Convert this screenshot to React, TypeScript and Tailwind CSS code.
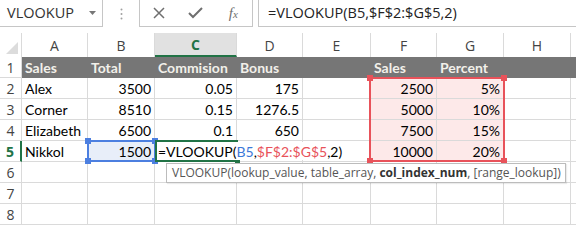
import React from "react";

const cols = [
  { w: 66, label: "A" },
  { w: 67, label: "B" },
  { w: 82, label: "C" },
  { w: 66, label: "D" },
  { w: 68, label: "E" },
  { w: 66, label: "F" },
  { w: 67, label: "G" },
  { w: 67, label: "H" },
];

type Cell = { t?: string; r?: boolean };
const data: Cell[][] = [
  [{ t: "Sales" }, { t: "Total" }, { t: "Commision" }, { t: "Bonus" }, {}, { t: "Sales" }, { t: "Percent" }, {}],
  [{ t: "Alex" }, { t: "3500", r: true }, { t: "0.05", r: true }, { t: "175", r: true }, {}, { t: "2500", r: true }, { t: "5%", r: true }, {}],
  [{ t: "Corner" }, { t: "8510", r: true }, { t: "0.15", r: true }, { t: "1276.5", r: true }, {}, { t: "5000", r: true }, { t: "10%", r: true }, {}],
  [{ t: "Elizabeth" }, { t: "6500", r: true }, { t: "0.1", r: true }, { t: "650", r: true }, {}, { t: "7500", r: true }, { t: "15%", r: true }, {}],
  [{ t: "Nikkol" }, { t: "1500", r: true }, {}, {}, {}, { t: "10000", r: true }, { t: "20%", r: true }, {}],
  [{}, {}, {}, {}, {}, {}, {}, {}],
  [{}, {}, {}, {}, {}, {}, {}, {}],
  [{}, {}, {}, {}, {}, {}, {}, {}],
];

function Handle({ cls }: { cls: string }) {
  return <div className={`absolute w-[6px] h-[6px] ${cls}`} />;
}

export default function App() {
  return (
    <div className="w-[576px] h-[228px] overflow-hidden bg-white relative" style={{ fontFamily: "Lato, 'Liberation Sans', sans-serif" }}>
      {/* Formula bar */}
      <div className="flex h-[27px] items-stretch">
        <div className="w-[103px] border border-t-0 border-l-0 border-[#c6c6c6] flex items-center justify-between pl-[7px] pr-[5px]">
          <span className="text-[14.5px] text-[#333]" style={{ fontFamily: "'Open Sans', sans-serif" }}>VLOOKUP</span>
          <svg width="8" height="5" viewBox="0 0 8 5"><path d="M0 0h7L3.5 4z" fill="#777" /></svg>
        </div>
        <div className="w-[36px] flex items-center justify-center">
          <svg width="3" height="12" viewBox="0 0 3 12"><circle cx="1.5" cy="1.5" r="1" fill="#a0a0a0" /><circle cx="1.5" cy="6" r="1" fill="#a0a0a0" /><circle cx="1.5" cy="10.5" r="1" fill="#a0a0a0" /></svg>
        </div>
        <div className="w-[114px] border border-t-0 border-[#c6c6c6] flex items-center">
          <div className="w-[38px] flex justify-center">
            <svg width="12" height="12" viewBox="0 0 12 12"><path d="M1 1L11 11M11 1L1 11" stroke="#6f6f6f" strokeWidth="1.5" /></svg>
          </div>
          <div className="w-[38px] flex justify-center">
            <svg width="15" height="12" viewBox="0 0 15 12"><path d="M1 6L5 10L14 1" stroke="#6f6f6f" strokeWidth="2" fill="none" /></svg>
          </div>
          <div className="w-[38px] flex justify-center">
            <span className="italic text-[15px] text-[#6f6f6f] leading-none" style={{ fontFamily: "'Liberation Serif', serif" }}>f<span className="text-[11px]">x</span></span>
          </div>
        </div>
        <div className="w-[5px]" />
        <div className="flex-1 border border-t-0 border-r-0 border-[#c6c6c6] flex items-center pl-[9px]">
          <span className="text-[14.5px] text-[#222]" style={{ fontFamily: "'Open Sans', sans-serif" }}>=VLOOKUP(B5,$F$2:$G$5,2)</span>
        </div>
      </div>
      <div className="h-[6px]" />
      {/* Column headers */}
      <div className="flex h-[24px]">
        <div className="w-[22px] h-full relative border-r border-[#dadada]">
          <svg className="absolute right-[3px] bottom-[3px]" width="12" height="12" viewBox="0 0 12 12"><path d="M12 0V12H0z" fill="#dcdcdc" /></svg>
        </div>
        {cols.map((c) => (
          <div
            key={c.label}
            style={{ width: c.w }}
            className={`h-full flex items-center justify-center border-r border-[#dadada] text-[14px] ${c.label === "C" ? "bg-[#e1e1e1] text-[#217346] font-bold border-b-2 border-b-[#217346]" : "text-[#444]"}`}
          >
            <span style={{ fontFamily: "'Open Sans', sans-serif" }}>{c.label}</span>
          </div>
        ))}
        <div className="flex-1" />
      </div>
      {/* Rows */}
      <div className="relative">
        {data.map((row, i) => (
          <div key={i} className="flex h-[21px]">
            <div
              className={`w-[22px] h-full flex items-center justify-center border-r border-b border-[#dadada] text-[14px] ${i === 4 ? "text-[#217346] font-bold border-r-2 border-r-[#217346]" : "text-[#444]"}`}
              style={{ fontFamily: "'Open Sans', sans-serif" }}
            >
              {i + 1}
            </div>
            {row.map((c, j) => {
              const inPink = j >= 5 && j <= 6 && i >= 1 && i <= 4;
              const isB5 = i === 4 && j === 1;
              return (
                <div
                  key={j}
                  style={{ width: cols[j].w }}
                  className={`h-full flex items-center border-r border-b text-[14px] ${i === 0 ? "bg-[#767676] text-[#f2f0ea] font-bold border-[#767676] pl-[3px]" : "text-black border-[#dadada]"} ${c.r ? "justify-end pr-[3px]" : "pl-[3px]"} ${inPink ? "bg-[#fde9e9]" : ""} ${isB5 ? "bg-[#e8eef9]" : ""}`}
                >
                  {c.t ?? ""}
                </div>
              );
            })}
            <div className={`flex-1 h-full border-b ${i === 0 ? "bg-[#767676] border-[#767676]" : "border-[#dadada]"}`} />
          </div>
        ))}

        {/* F2:G5 red range */}
        <div className="absolute left-[369px] top-[20px] w-[136px] h-[85px] border-2 border-[#e8525a]">
          <Handle cls="bg-[#e8525a] -left-[4px] -top-[4px]" />
          <Handle cls="bg-[#e8525a] -right-[4px] -top-[4px]" />
          <Handle cls="bg-[#e8525a] -left-[4px] -bottom-[4px]" />
          <Handle cls="bg-[#e8525a] -right-[4px] -bottom-[4px]" />
        </div>

        {/* B5 blue range */}
        <div className="absolute left-[87px] top-[83px] w-[69px] h-[22px] border-2 border-[#4c7fe0]">
          <Handle cls="bg-[#4c7fe0] -left-[4px] -top-[4px]" />
          <Handle cls="bg-[#4c7fe0] -right-[4px] -top-[4px]" />
          <Handle cls="bg-[#4c7fe0] -left-[4px] -bottom-[4px]" />
          <Handle cls="bg-[#4c7fe0] -right-[4px] -bottom-[4px]" />
        </div>

        {/* C5 active editing cell */}
        <div className="absolute left-[155px] top-[83px] w-[83px] h-[22px] border-2 border-[#217346]">
          <div className="absolute w-[5px] h-[5px] bg-[#217346] -right-[4px] -bottom-[4px]" />
        </div>
        <div className="absolute left-[157px] top-[85px] h-[18px] bg-white flex items-center pl-[1px] pr-[2px] text-[14px] text-black whitespace-nowrap">
          =VLOOKUP(<span className="text-[#3c78d8]">B5</span>,<span className="text-[#e8525a]">$F$2:$G$5</span>,2)
        </div>

        {/* Tooltip */}
        <div
          className="absolute left-[166px] top-[106px] w-[400px] h-[20px] border border-[#bcbcbc] bg-white flex items-center pl-[5px] text-[12px] text-[#555] whitespace-nowrap shadow-[1px_1px_1px_rgba(0,0,0,0.08)]"
          style={{ fontFamily: "'Open Sans', sans-serif" }}
        >
          <span>VLOOKUP(lookup_value, table_array,</span>
          <span>&nbsp;</span>
          <b className="font-bold text-[#333]">col_index_num</b>
          <span>, [range_lookup])</span>
        </div>
      </div>
    </div>
  );
}
